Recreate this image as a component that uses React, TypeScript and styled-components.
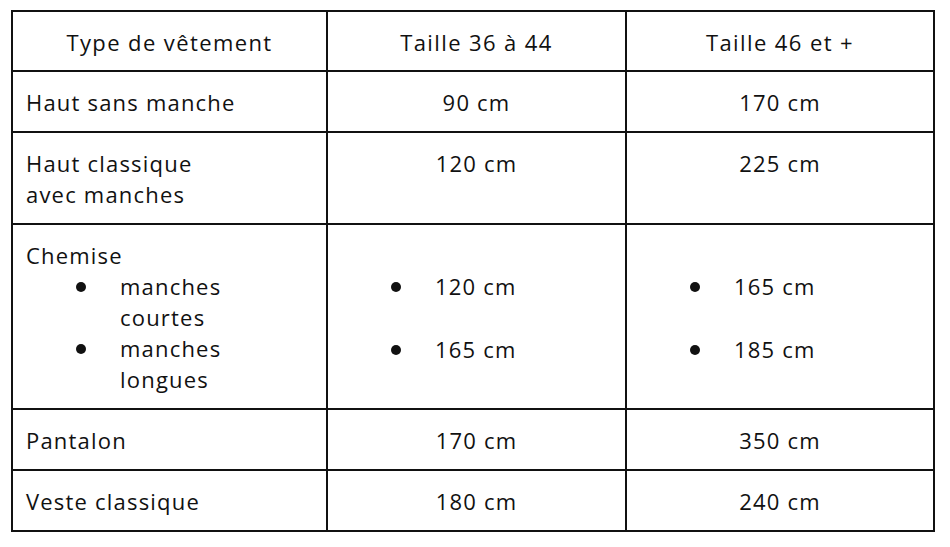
import React from "react";
import styled, { createGlobalStyle } from "styled-components";

const Global = createGlobalStyle`
  html, body { margin: 0; padding: 0; background: #ffffff; }
  body { font-family: "Open Sans", Lato, sans-serif; color: #111111; }
`;

const Page = styled.div`
  padding: 10px 0 0 11px;
`;

const Table = styled.table`
  border-collapse: collapse;
  table-layout: fixed;
  width: 924px;
`;

const Cell = styled.td<{ $center?: boolean }>`
  border: 2px solid #111111;
  padding: 15px 13px 13px;
  font-size: 22px;
  line-height: 31px;
  letter-spacing: 1.2px;
  vertical-align: top;
  text-align: ${(p) => (p.$center ? "center" : "left")};
`;

const HeadCell = styled.th`
  border: 2px solid #111111;
  padding: 15px 13px 12px;
  font-size: 22px;
  line-height: 31px;
  letter-spacing: 1.4px;
  font-weight: 400;
  text-align: center;
`;

const List = styled.ul<{ $lead?: number }>`
  list-style: none;
  margin: 0;
  padding: ${(p) => p.$lead ?? 0}px 0 0 94px;
  text-align: left;
`;

const Item = styled.li<{ $gap?: number }>`
  position: relative;
  margin-top: ${(p) => p.$gap ?? 0}px;
  &::before {
    content: "";
    position: absolute;
    left: -44px;
    top: 11px;
    width: 10px;
    height: 10px;
    border-radius: 50%;
    background: #111111;
  }
`;

const rows: { label: React.ReactNode; a: string; b: string }[] = [
  { label: "Haut sans manche", a: "90 cm", b: "170 cm" },
  {
    label: (
      <>
        Haut classique
        <br />
        avec manches
      </>
    ),
    a: "120 cm",
    b: "225 cm",
  },
];

const tail = [
  { label: "Pantalon", a: "170 cm", b: "350 cm" },
  { label: "Veste classique", a: "180 cm", b: "240 cm" },
];

export default function App() {
  return (
    <>
      <Global />
      <Page>
        <Table>
          <colgroup>
            <col style={{ width: 315 }} />
            <col style={{ width: 299 }} />
            <col style={{ width: 308 }} />
          </colgroup>
          <thead>
            <tr>
              <HeadCell>Type de vêtement</HeadCell>
              <HeadCell>Taille 36 à 44</HeadCell>
              <HeadCell>Taille 46 et +</HeadCell>
            </tr>
          </thead>
          <tbody>
            {rows.map((r, i) => (
              <tr key={i}>
                <Cell>{r.label}</Cell>
                <Cell $center>{r.a}</Cell>
                <Cell $center>{r.b}</Cell>
              </tr>
            ))}
            <tr>
              <Cell>
                Chemise
                <List>
                  <Item>
                    manches
                    <br />
                    courtes
                  </Item>
                  <Item>
                    manches
                    <br />
                    longues
                  </Item>
                </List>
              </Cell>
              <Cell>
                <List $lead={31}>
                  <Item>120 cm</Item>
                  <Item $gap={32}>165 cm</Item>
                </List>
              </Cell>
              <Cell>
                <List $lead={31}>
                  <Item>165 cm</Item>
                  <Item $gap={32}>185 cm</Item>
                </List>
              </Cell>
            </tr>
            {tail.map((r, i) => (
              <tr key={`t${i}`}>
                <Cell>{r.label}</Cell>
                <Cell $center>{r.a}</Cell>
                <Cell $center>{r.b}</Cell>
              </tr>
            ))}
          </tbody>
        </Table>
      </Page>
    </>
  );
}
